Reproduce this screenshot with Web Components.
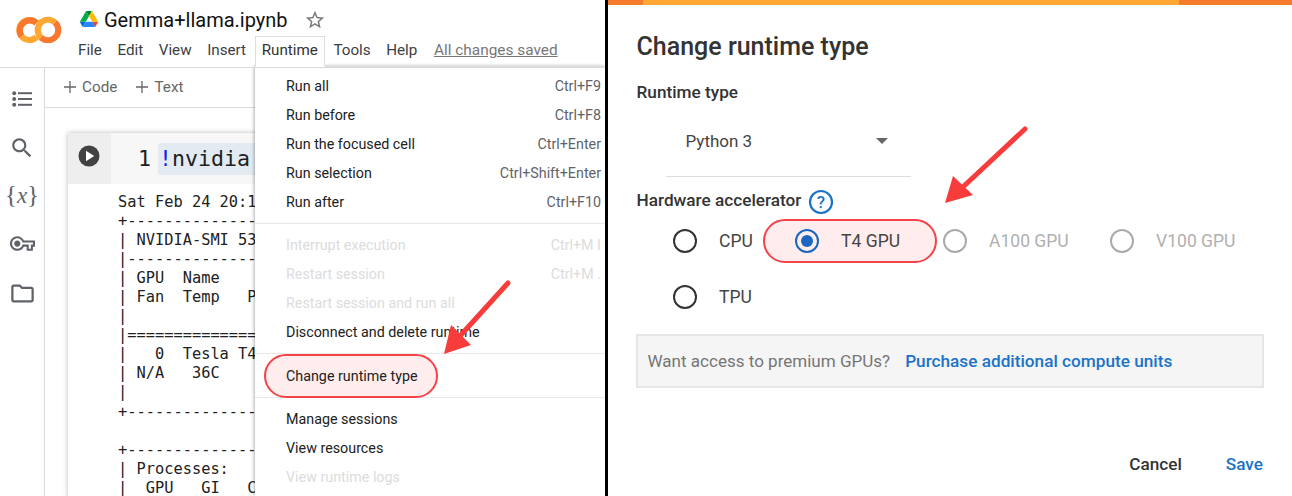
<!DOCTYPE html>
<html>
<head>
<meta charset="utf-8">
<style>
	html, body { margin: 0; padding: 0; background: #000; }
	body { width: 1292px; height: 496px; overflow: hidden; display: flex; gap: 3px; font-family: Roboto, sans-serif; }
</style>
</head>
<body>
<colab-window>
	<colab-header slot="header"></colab-header>
	<colab-sidebar slot="sidebar"></colab-sidebar>
	<colab-toolbar slot="toolbar"></colab-toolbar>
	<colab-cell slot="cell"></colab-cell>
	<runtime-menu slot="menu">
		<menu-item shortcut="Ctrl+F9">Run all</menu-item>
		<menu-item shortcut="Ctrl+F8">Run before</menu-item>
		<menu-item shortcut="Ctrl+Enter">Run the focused cell</menu-item>
		<menu-item shortcut="Ctrl+Shift+Enter">Run selection</menu-item>
		<menu-item shortcut="Ctrl+F10">Run after</menu-item>
		<menu-sep></menu-sep>
		<menu-item disabled shortcut="Ctrl+M I">Interrupt execution</menu-item>
		<menu-item disabled shortcut="Ctrl+M .">Restart session</menu-item>
		<menu-item disabled>Restart session and run all</menu-item>
		<menu-item>Disconnect and delete runtime</menu-item>
		<menu-sep></menu-sep>
		<menu-item marked>Change runtime type</menu-item>
		<menu-sep></menu-sep>
		<menu-item>Manage sessions</menu-item>
		<menu-item>View resources</menu-item>
		<menu-item disabled>View runtime logs</menu-item>
	</runtime-menu>
</colab-window>
<runtime-dialog></runtime-dialog>

<script>
class ColabWindow extends HTMLElement {
	constructor() {
		super();
		this.attachShadow({ mode: "open" }).innerHTML = `
			<style>
				:host { display: flex; flex-direction: column; width: 605px; height: 496px; background: #fff; position: relative; overflow: hidden; flex: none; }
				.body { display: flex; flex: 1; min-height: 0; }
				.main { flex: 1; min-width: 0; display: flex; flex-direction: column; }
				.scroll { flex: 1; min-height: 0; padding: 25px 0 0 23px; overflow: hidden; }
				.menu { position: absolute; left: 255px; top: 66px; }
			</style>
			<slot name="header"></slot>
			<div class="body">
				<slot name="sidebar"></slot>
				<div class="main">
					<slot name="toolbar"></slot>
					<div class="scroll"><slot name="cell"></slot></div>
				</div>
			</div>
			<div class="menu"><slot name="menu"></slot></div>
		`;
	}
}
customElements.define("colab-window", ColabWindow);

class ColabHeader extends HTMLElement {
	constructor() {
		super();
		const items = ["File", "Edit", "View", "Insert", "Runtime", "Tools", "Help"];
		this.attachShadow({ mode: "open" }).innerHTML = `
			<style>
				:host { display: flex; height: 67px; box-sizing: content-box; border-bottom: 1px solid #dadada; flex: none; position: relative; z-index: 2; }
				.logo { width: 78px; flex: none; }
				.logo svg { display: block; }
				.right { display: flex; flex-direction: column; }
				.title { display: flex; align-items: center; height: 36px; padding-top: 3px; box-sizing: border-box; font-size: 20px; color: #111; }
				.title .drive { width: 18px; height: 16px; margin: 0 6px 2px 2px; }
				.title .star { width: 22px; height: 22px; margin-left: 16px; }
				nav { display: flex; align-items: flex-start; height: 31px; font-size: 15.2px; line-height: 28px; color: #3c4043; gap: 15.6px; }
				nav .on { margin: 0 -7px; padding: 0 6px; height: 31px; line-height: 26px; box-sizing: border-box; border: 1px solid #dedede; border-bottom-color: #fff; background: #fff; color: #333; position: relative; z-index: 4; }
				nav .saved { color: #777; text-decoration: underline; margin-left: 1px; font-size: 15.4px; }
			</style>
			<div class="logo">
				<svg width="78" height="67" viewBox="0 0 78 67" fill="none" stroke-width="6.2">
					<path d="M36.5 23 A10 10 0 1 0 36.5 37" stroke="#ffa733" stroke-width="6.2"/>
					<path d="M36.5 23 A10 10 0 0 0 21.5 36" stroke="#f9772f"/>
					<path d="M41 37.5 A10 10 0 0 1 55 22.5" stroke="#ffa733"/>
					<path d="M55 22.5 A10 10 0 0 1 41 37.5" stroke="#f9772f"/>
				</svg>
			</div>
			<div class="right">
				<div class="title">
					<svg class="drive" viewBox="0 0 87.3 78">
						<path d="m6.6 66.85 3.85 6.65c.8 1.4 1.95 2.5 3.3 3.3l13.75-23.8h-27.5c0 1.55.4 3.1 1.2 4.5z" fill="#0066da"/>
						<path d="m43.65 25-13.75-23.8c-1.35.8-2.5 1.9-3.3 3.3l-25.4 44a9.06 9.06 0 0 0 -1.2 4.5h27.5z" fill="#00ac47"/>
						<path d="m73.55 76.8c1.35-.8 2.5-1.9 3.3-3.3l1.6-2.75 7.65-13.25c.8-1.4 1.2-2.95 1.2-4.5h-27.502l5.852 11.5z" fill="#ea4335"/>
						<path d="m43.65 25 13.75-23.8c-1.35-.8-2.9-1.2-4.5-1.2h-18.5c-1.6 0-3.15.45-4.5 1.2z" fill="#00832d"/>
						<path d="m59.8 53h-32.3l-13.75 23.8c1.35.8 2.9 1.2 4.5 1.2h50.8c1.6 0 3.15-.45 4.5-1.2z" fill="#2684fc"/>
						<path d="m73.4 26.5-12.7-22c-.8-1.4-1.95-2.5-3.3-3.3l-13.75 23.8 16.15 28h27.45c0-1.55-.4-3.1-1.2-4.5z" fill="#ffba00"/>
					</svg>
					<span>Gemma+llama.ipynb</span>
					<svg class="star" viewBox="0 0 24 24" fill="#777"><path d="M22 9.24l-7.19-.62L12 2 9.19 8.63 2 9.24l5.46 4.73L5.82 21 12 17.27 18.18 21l-1.63-7.03L22 9.24zM12 15.4l-3.76 2.27 1-4.28-3.32-2.88 4.38-.38L12 6.1l1.71 4.04 4.38.38-3.32 2.88 1 4.28L12 15.4z"/></svg>
				</div>
				<nav>
					${items.map(i => `<span class="${i === "Runtime" ? "on" : ""}">${i}</span>`).join("")}
					<span class="saved">All changes saved</span>
				</nav>
			</div>
		`;
	}
}
customElements.define("colab-header", ColabHeader);

class ColabSidebar extends HTMLElement {
	constructor() {
		super();
		this.attachShadow({ mode: "open" }).innerHTML = `
			<style>
				:host { display: flex; flex-direction: column; align-items: center; width: 44px; border-right: 1px solid #dadada; padding-top: 7px; box-sizing: content-box; flex: none; color: #5f6368; }
				.i { height: 48.5px; width: 44px; display: flex; align-items: center; justify-content: center; flex: none; }
				svg { display: block; fill: #5f6368; }
				.x { font: 25px "Liberation Serif", serif; color: #5f6368; white-space: nowrap; margin-top: -2px; }
				.x i { font-size: 23px; }
			</style>
			<div class="i"><svg width="24" height="24" viewBox="0 0 24 24"><circle cx="4.2" cy="6.2" r="2"/><circle cx="4.2" cy="12" r="2"/><circle cx="4.2" cy="17.8" r="2"/><rect x="8" y="5.2" width="14" height="2"/><rect x="8" y="11" width="14" height="2"/><rect x="8" y="16.8" width="14" height="2"/></svg></div>
			<div class="i"><svg width="26" height="26" viewBox="0 0 24 24"><path d="M15.5 14h-.79l-.28-.27C15.41 12.59 16 11.11 16 9.5 16 5.91 13.09 3 9.5 3S3 5.91 3 9.5 5.91 16 9.5 16c1.61 0 3.09-.59 4.23-1.57l.27.28v.79l5 4.99L20.49 19l-4.99-5zm-6 0C7.01 14 5 11.99 5 9.5S7.01 5 9.5 5 14 7.01 14 9.5 11.99 14 9.5 14z"/></svg></div>
			<div class="i"><span class="x">{<i>x</i>}</span></div>
			<div class="i"><svg width="25" height="25" viewBox="0 0 24 24" style="margin-top:-2px"><path d="M22 19h-6v-4h-2.68c-1.14 2.42-3.6 4-6.32 4-3.86 0-7-3.14-7-7s3.14-7 7-7c2.72 0 5.17 1.58 6.32 4H24v6h-2v4zm-4-2h2v-4h2v-2H11.94l-.23-.67C11.01 8.34 9.11 7 7 7c-2.76 0-5 2.24-5 5s2.24 5 5 5c2.11 0 4.01-1.34 4.71-3.33l.23-.67H18v4zM7 15c-1.65 0-3-1.35-3-3s1.35-3 3-3 3 1.35 3 3-1.35 3-3 3z"/></svg></div>
			<div class="i"><svg width="27" height="27" viewBox="0 0 24 24"><path d="M9.17 6l2 2H20v10H4V6h5.17M10 4H4c-1.1 0-1.99.9-1.99 2L2 18c0 1.1.9 2 2 2h16c1.1 0 2-.9 2-2V8c0-1.1-.9-2-2-2h-8l-2-2z"/></svg></div>
		`;
	}
}
customElements.define("colab-sidebar", ColabSidebar);

class ColabToolbar extends HTMLElement {
	constructor() {
		super();
		this.attachShadow({ mode: "open" }).innerHTML = `
			<style>
				:host { display: flex; align-items: center; gap: 19px; height: 38px; padding: 0 0 1px 19px; border-bottom: 1px solid #dadada; box-sizing: content-box; font-size: 15.3px; color: #666; flex: none; }
				span { display: inline-flex; align-items: center; gap: 6px; }
				svg { display: block; }
			</style>
			<span><svg width="12" height="12" viewBox="0 0 12 12"><path d="M6 0v12M0 6h12" stroke="#666" stroke-width="1.3"/></svg>Code</span>
			<span><svg width="12" height="12" viewBox="0 0 12 12"><path d="M6 0v12M0 6h12" stroke="#666" stroke-width="1.3"/></svg>Text</span>
		`;
	}
}
customElements.define("colab-toolbar", ColabToolbar);

class ColabCell extends HTMLElement {
	constructor() {
		super();
		// only the part of each line that shows left of the open menu
		const lines = [
			"Sat Feb 24 20:1",
			"+--------------",
			"| NVIDIA-SMI 53",
			"|--------------",
			"| GPU  Name",
			"| Fan  Temp   P",
			"|",
			"|==============",
			"|   0  Tesla T4",
			"| N/A   36C",
			"|",
			"+--------------",
			" ",
			"+--------------",
			"| Processes:",
			"|  GPU   GI   C"
		];
		this.attachShadow({ mode: "open" }).innerHTML = `
			<style>
				:host { display: block; width: 600px; box-shadow: 0 0 5px rgba(0,0,0,.28); background: #fff; }
				.head { display: flex; height: 51px; background: #f7f7f7; }
				.gutter { width: 43px; background: #eee; display: flex; align-items: center; justify-content: center; flex: none; padding: 0 1px 5px 0; box-sizing: border-box; }
				.gutter svg { display: block; }
				.code { flex: 1; font: 21.6px/46px "DejaVu Sans Mono", monospace; color: #212121; padding-left: 27px; white-space: pre; display: flex; align-items: center; gap: 7px; }
				.code .sel { flex: 1; background: #e3eaf1; height: 32px; line-height: 32px; padding-left: 1px; border-radius: 3px; }
				.code em { font-style: normal; color: #0d1ef0; }
				pre { margin: 0; padding: 9px 0 0 50px; font: 15.35px/19.05px "DejaVu Sans Mono", monospace; color: #212121; }
			</style>
			<div class="head">
				<div class="gutter"><svg width="22" height="22" viewBox="0 0 22 22"><circle cx="11" cy="11" r="10.5" fill="#424242"/><path d="M8 5.8v10.4L16.2 11z" fill="#fff"/></svg></div>
				<div class="code"><span>1</span><span class="sel"><em>!</em>nvidia</span></div>
			</div>
			<pre>${lines.join("\n")}</pre>
		`;
	}
}
customElements.define("colab-cell", ColabCell);

class RuntimeMenu extends HTMLElement {
	constructor() {
		super();
		this.attachShadow({ mode: "open" }).innerHTML = `
			<style>
				:host { display: block; width: 350px; height: 430px; padding-top: 4px; box-sizing: border-box; background: #fff; box-shadow: -1px 0 3px rgba(0,0,0,.3); border-top: 1px solid #dedede; position: relative; }
				svg { position: absolute; left: 185px; top: 205px; overflow: visible; }
			</style>
			<slot></slot>
			<svg width="80" height="90" viewBox="0 0 80 90">
				<path d="M68 11 L20 64" stroke="#f83c3c" stroke-width="5" stroke-linecap="round" fill="none"/>
				<path d="M4 82 L11 53 L31 73 Z" fill="#f83c3c"/>
			</svg>
		`;
	}
}
customElements.define("runtime-menu", RuntimeMenu);

class MenuItem extends HTMLElement {
	constructor() {
		super();
		const key = this.getAttribute("shortcut") || "";
		this.attachShadow({ mode: "open" }).innerHTML = `
			<style>
				:host { display: flex; justify-content: space-between; align-items: center; height: 29px; padding: 0 4px 0 31px; font-size: 14.3px; color: #212121; position: relative; white-space: nowrap; }
				:host([disabled]) { color: #dcdcdc; }
				:host([disabled]) .key { color: #dcdcdc; }
				:host([marked]) { margin-top: 7px; }
				.key { color: #5f6368; }
				:host([marked]) .ring { display: block; }
				.ring { display: none; position: absolute; left: 9px; top: -7px; width: 174px; height: 44px; box-sizing: border-box; border: 2px solid #f44248; border-radius: 22px; background: #ffeded; }
				.text { position: relative; }
			</style>
			<div class="ring"></div>
			<span class="text"><slot></slot></span>
			<span class="key">${key}</span>
		`;
	}
}
customElements.define("menu-item", MenuItem);

class MenuSep extends HTMLElement {
	constructor() {
		super();
		this.attachShadow({ mode: "open" }).innerHTML = `
			<style>:host { display: block; height: 1px; margin: 7px 0 6px; background: #e8e8e8; }</style>
		`;
	}
}
customElements.define("menu-sep", MenuSep);

class RadioOption extends HTMLElement {
	constructor() {
		super();
		this.attachShadow({ mode: "open" }).innerHTML = `
			<style>
				:host { display: flex; align-items: center; font-size: 17.5px; color: #444; height: 24px; white-space: nowrap; }
				.dot { width: 24px; height: 24px; box-sizing: border-box; border: 2px solid #333; border-radius: 50%; flex: none; margin-right: 22.6px; display: flex; align-items: center; justify-content: center; }
				:host([disabled]) { color: #b0b0b0; }
				:host([disabled]) .dot { border-color: #aaa; }
				:host([checked]) .dot { border-color: #1a66c0; }
				:host([checked]) .dot::after { content: ""; width: 12px; height: 12px; border-radius: 50%; background: #1a66c0; }
				.t { margin-top: -1px; }
			</style>
			<span class="dot"></span><span class="t"><slot></slot></span>
		`;
	}
}
customElements.define("radio-option", RadioOption);

class RuntimeDialog extends HTMLElement {
	constructor() {
		super();
		this.attachShadow({ mode: "open" }).innerHTML = `
			<style>
				:host { display: flex; flex-direction: column; flex: 1; height: 496px; background: #fff; position: relative; color: #333; overflow: hidden; }
				.bar { display: flex; height: 5px; background: #ffa733; flex: none; }
				.bar i { display: block; background: #f57a2e; }
				.bar i:first-child { width: 35px; }
				.bar i:last-child { width: 113px; margin-left: auto; }
				.content { padding: 0 28px 0 28.5px; display: flex; flex-direction: column; flex: 1; }
				h2 { font-weight: 500; font-size: 25px; line-height: 30px; margin: 27px 0 0; color: #333; }
				h3 { font-weight: 500; font-size: 17.2px; line-height: 20px; margin: 0; color: #333; }
				.rt { margin-top: 20px; }
				.select { display: flex; align-items: center; justify-content: space-between; width: 245px; height: 67px; box-sizing: border-box; margin: 8px 0 0 29px; padding: 0 23px 4px 20px; border-bottom: 1px solid #ddd; font-size: 17px; color: #444; }
				.select i { width: 0; height: 0; border: 6px solid transparent; border-top: 6px solid #666; border-bottom: 0; }
				.hw { display: flex; align-items: center; gap: 7px; margin-top: 10px; height: 26px; }
				.hw svg { display: block; margin-top: 3px; }
				.grid { display: grid; grid-template-columns: 122px 148px 167px auto; row-gap: 32px; margin: 16px 0 0 36px; }
				.t4 { position: relative; }
				.t4 radio-option { position: relative; }
				.ring { position: absolute; left: -32px; top: -10px; width: 174px; height: 44px; box-sizing: border-box; border: 2px solid #f44248; border-radius: 22px; background: #ffeded; }
				.box { margin: 25px 0 0 -1px; height: 54px; box-sizing: border-box; border: 2px solid #e6e6e6; background: #f5f5f5; padding: 0 10px; display: flex; align-items: center; gap: 15px; font-size: 17.05px; color: #757575; white-space: nowrap; }
				.box a { color: #1a73c8; font-weight: 500; font-size: 17.2px; }
				.actions { display: flex; justify-content: flex-end; gap: 44px; margin: 66px 1px 0 0; font-size: 17.2px; font-weight: 500; line-height: 20px; }
				.actions .save { color: #1a73c8; }
				.arrow { position: absolute; left: 330px; top: 120px; overflow: visible; }
			</style>
			<div class="bar"><i></i><i></i></div>
			<div class="content">
				<h2>Change runtime type</h2>
				<h3 class="rt">Runtime type</h3>
				<div class="select"><span>Python 3</span><i></i></div>
				<div class="hw"><h3>Hardware accelerator</h3>
					<svg width="26" height="26" viewBox="0 0 26 26"><circle cx="13" cy="13" r="11" fill="none" stroke="#1a73c8" stroke-width="2.2"/><text x="13" y="19" text-anchor="middle" font-family="Roboto, sans-serif" font-size="17" font-weight="500" fill="#1a73c8">?</text></svg>
				</div>
				<div class="grid">
					<radio-option>CPU</radio-option>
					<div class="t4"><div class="ring"></div><radio-option checked>T4 GPU</radio-option></div>
					<radio-option disabled>A100 GPU</radio-option>
					<radio-option disabled>V100 GPU</radio-option>
					<radio-option>TPU</radio-option>
				</div>
				<div class="box"><span>Want access to premium GPUs?</span><a>Purchase additional compute units</a></div>
				<div class="actions"><span>Cancel</span><span class="save">Save</span></div>
			</div>
			<svg class="arrow" width="100" height="90" viewBox="0 0 100 90">
				<path d="M87 9 L26 66" stroke="#f83c3c" stroke-width="5" stroke-linecap="round" fill="none"/>
				<path d="M7 83 L15 56 L35 75 Z" fill="#f83c3c"/>
			</svg>
		`;
	}
}
customElements.define("runtime-dialog", RuntimeDialog);
</script>
</body>
</html>
